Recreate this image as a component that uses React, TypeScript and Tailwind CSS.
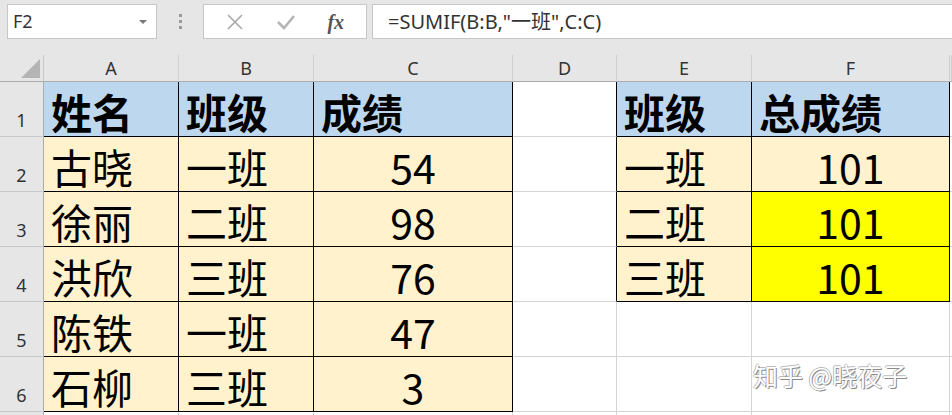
import React from 'react';

type Cell = {
  t?: string;
  bold?: boolean;
  center?: boolean;
  bg?: string;
  r?: 'k' | 'g';
  b?: 'k' | 'g';
};

const BG = {
  blue: 'bg-[#bdd7ee]',
  beige: 'bg-[#fff2cc]',
  yellow: 'bg-[#ffff00]',
  white: 'bg-white',
};

const borderR = { k: 'border-r-black', g: 'border-r-[#d4d4d4]' };
const borderB = { k: 'border-b-black', g: 'border-b-[#d4d4d4]' };

/* 表格数据 ------------------------------------------------------ */
const h = (t: string): Cell => ({ t, bold: true, bg: BG.blue, r: 'k', b: 'k' });
const d = (t: string, center = false, bg = BG.beige): Cell => ({ t, center, bg, r: 'k', b: 'k' });
const blank = (r: 'k' | 'g' = 'g', b: 'k' | 'g' = 'g'): Cell => ({ bg: BG.white, r, b });

const rows: Cell[][] = [
  [h('姓名'), h('班级'), h('成绩'), blank('k'), h('班级'), h('总成绩'), blank()],
  [d('古晓'), d('一班'), d('54', true), blank('k'), d('一班'), d('101', true), blank()],
  [d('徐丽'), d('二班'), d('98', true), blank('k'), d('二班'), d('101', true, BG.yellow), blank()],
  [d('洪欣'), d('三班'), d('76', true), blank('k'), d('三班'), d('101', true, BG.yellow), blank()],
  [d('陈铁'), d('一班'), d('47', true), blank(), blank(), blank(), blank()],
  [d('石柳'), d('三班'), d('3', true), blank(), blank(), blank(), blank()],
  [blank(), blank(), blank(), blank(), blank(), blank(), blank()],
];

const cols = ['A', 'B', 'C', 'D', 'E', 'F', ''];

function Toolbar() {
  return (
    <div className="h-[55px] bg-[#e6e6e6] flex items-start pt-[4px] pl-[7px] font-['Noto_Sans','Noto_Sans_CJK_SC',sans-serif]">
      {/* 名称框 */}
      <div className="w-[150px] h-[35px] bg-white border border-[#c6c6c6] flex items-center justify-between pl-[5px] pr-[9px]">
        <span className="text-[18px] text-[#333]">F2</span>
        <span className="w-0 h-0 border-l-[4px] border-r-[4px] border-t-[4px] border-l-transparent border-r-transparent border-t-[#777]" />
      </div>
      <div className="w-[46px] h-[35px] flex flex-col items-center justify-center gap-[3px]">
        <span className="w-[3px] h-[3px] bg-[#9a9a9a]" />
        <span className="w-[3px] h-[3px] bg-[#9a9a9a]" />
        <span className="w-[3px] h-[3px] bg-[#9a9a9a]" />
      </div>
      {/* 按钮 */}
      <div className="w-[164px] h-[35px] bg-white border border-[#c6c6c6] flex items-center justify-around px-[6px]">
        <svg width="18" height="18" viewBox="0 0 18 18">
          <path d="M2 2 L16 16 M16 2 L2 16" stroke="#a8a8a8" strokeWidth="1.6" />
        </svg>
        <svg width="20" height="18" viewBox="0 0 20 18">
          <path d="M2 9 L8 15 L18 3" stroke="#b4b4b4" strokeWidth="2.6" fill="none" />
        </svg>
        <span className="text-[20px] italic font-bold text-[#555] font-['Liberation_Serif',serif]">fx</span>
      </div>
      {/* 编辑栏 */}
      <div className="ml-[5px] flex-1 h-[35px] bg-white border border-[#c6c6c6] border-r-0 flex items-center pl-[15px]">
        <span className="text-[20px] text-[#333]">=SUMIF(B:B,"一班",C:C)</span>
      </div>
    </div>
  );
}

export default function App() {
  return (
    <div className="w-[952px] h-[415px] overflow-hidden bg-white relative font-['Noto_Sans_CJK_SC','Noto_Sans',sans-serif]">
      <Toolbar />

      <div className="grid grid-cols-[44px_135px_135px_199px_104px_135px_198px_2px]">
        {/* 列标 */}
        <div className="h-[27px] bg-[#e6e6e6] border-b border-b-[#ababab] border-r border-r-[#c8c8c8] flex items-end justify-end">
          <span className="w-0 h-0 mr-[3px] mb-[3px] border-solid border-transparent border-b-[#b4b4b4] [border-bottom-width:19px] [border-left-width:19px] [border-top-width:0px] [border-right-width:0px]" />
        </div>
        {cols.map((c, i) => (
          <div
            key={i}
            className="h-[27px] bg-[#e6e6e6] border-b border-b-[#ababab] border-r border-r-[#d0d0d0] flex items-center justify-center text-[18px] text-[#333] font-['Noto_Sans',sans-serif]"
          >
            {c}
          </div>
        ))}

        {rows.map((row, ri) => (
          <React.Fragment key={ri}>
            <div className="h-[55px] bg-[#e6e6e6] border-r border-r-[#ababab] border-b border-b-[#c8c8c8] flex items-end justify-center pb-[2px] text-[18px] text-[#333] font-['Noto_Sans',sans-serif]">
              {ri < 6 ? ri + 1 : ''}
            </div>
            {row.map((c, ci) => (
              <div
                key={ci}
                className={`h-[55px] border-r border-b ${c.bg} ${borderR[c.r ?? 'g']} ${borderB[c.b ?? 'g']} flex items-end leading-none pb-[4px] text-[41px] text-black ${
                  c.center ? 'justify-center' : 'justify-start pl-[7px]'
                } ${c.bold ? 'font-bold' : 'font-normal'}`}
              >
                {c.t}
              </div>
            ))}
          </React.Fragment>
        ))}
      </div>

      {/* 水印 */}
      <div className="absolute left-[753px] top-[357px] text-[25px] text-white [text-shadow:1px_1px_0_#8a8a8a,-1px_0_0_#bbbbbb,0_-1px_0_#bbbbbb]">
        知乎 @晓夜子
      </div>
    </div>
  );
}
